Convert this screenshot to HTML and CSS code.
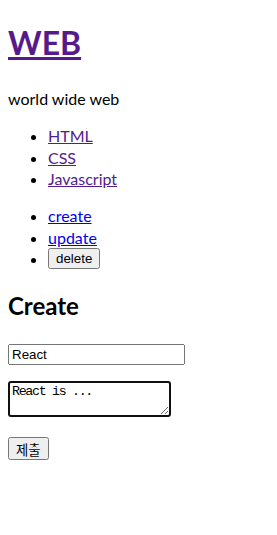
FILE: index.html
```html
<!DOCTYPE html>
<html lang="ko">
<head>
    <meta charset="UTF-8"/>
    <meta name="viewport" content="width=device-width, initial-scale=1.0"/>
    <title>WEB</title>
    <link rel="stylesheet" href="styles.css">
</head>
<body>

<header>
    <h1 class="site-title"><a href="/" class="link-visited">WEB</a></h1>
</header>

<p class="intro">world wide web</p>

<nav>
    <ul class="topic-list">
        <li><a href="/read/1" class="link-visited">HTML</a></li>
        <li><a href="/read/2" class="link-visited">CSS</a></li>
        <li><a href="/read/3" class="link-visited">Javascript</a></li>
    </ul>
</nav>

<ul class="control-list">
    <li><a href="/create" class="link-new">create</a></li>
    <li><a href="/update" class="link-new">update</a></li>
    <li><button type="button" class="delete-btn">delete</button></li>
</ul>

<article>
    <h2 class="article-title">Create</h2>
    <form class="create-form">
        <p><input type="text" name="title" class="title-input" placeholder="title" value="React"/></p>
        <p><textarea name="body" class="body-input" placeholder="body">React is ...</textarea></p>
        <p><input type="submit" class="submit-btn" value="제출"/></p>
    </form>
</article>

</body>
</html>
```
FILE: styles.css
```css
body {
    margin: 8px;
    font-family: Lato, "Noto Sans CJK KR", sans-serif;
    font-size: 16px;
    line-height: 21.33px;
    color: #000;
    background-color: #fff;
}

.site-title {
    margin: 16.44px 0 26.44px;
    font-size: 32px;
    line-height: 37px;
}

.intro {
    margin: 21.44px 0 16px;
}

.topic-list,
.control-list {
    margin: 16px 0;
    padding-left: 40px;
}

.topic-list {
    margin-top: 14.8px;
}

.link-visited {
    color: #551a8b;
}

.link-new {
    color: #0000ee;
}

.delete-btn {
    font: 13.33px "Liberation Sans", Arial, sans-serif;
    line-height: 15.33px;
    vertical-align: 2px;
}

.article-title {
    margin: 20.7px 0 19.92px;
    font-size: 24px;
    line-height: 32px;
}

.create-form p {
    margin: 16px 0;
}

.title-input {
    box-sizing: border-box;
    width: 177px;
    height: 21px;
    font: 13.33px "Liberation Sans", Arial, sans-serif;
}

.body-input {
    box-sizing: border-box;
    width: 163px;
    height: 36px;
    margin: 0;
    padding: 1px 2px;
    border: 2px solid #101010;
    border-radius: 3px;
    font: 13.33px "Liberation Mono", monospace;
    letter-spacing: -1.33px;
    outline: none;
}

.submit-btn {
    box-sizing: border-box;
    height: 23px;
    margin: 0;
    font: 13.33px "Liberation Sans", "Noto Sans CJK KR", sans-serif;
    line-height: 17px;
}
```
